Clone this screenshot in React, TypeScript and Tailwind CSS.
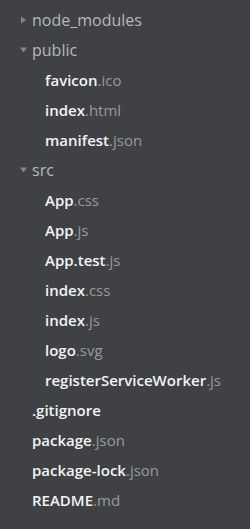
import React from 'react';

type Row = {
  name: string;
  ext?: string;
  depth: number;
  folder?: 'open' | 'closed';
};

const rows: Row[] = [
  { name: 'node_modules', depth: 0, folder: 'closed' },
  { name: 'public', depth: 0, folder: 'open' },
  { name: 'favicon', ext: '.ico', depth: 1 },
  { name: 'index', ext: '.html', depth: 1 },
  { name: 'manifest', ext: '.json', depth: 1 },
  { name: 'src', depth: 0, folder: 'open' },
  { name: 'App', ext: '.css', depth: 1 },
  { name: 'App', ext: '.js', depth: 1 },
  { name: 'App.test', ext: '.js', depth: 1 },
  { name: 'index', ext: '.css', depth: 1 },
  { name: 'index', ext: '.js', depth: 1 },
  { name: 'logo', ext: '.svg', depth: 1 },
  { name: 'registerServiceWorker', ext: '.js', depth: 1 },
  { name: '.gitignore', depth: 0 },
  { name: 'package', ext: '.json', depth: 0 },
  { name: 'package-lock', ext: '.json', depth: 0 },
  { name: 'README', ext: '.md', depth: 0 },
];

function Arrow({ open }: { open: boolean }) {
  return (
    <svg width="7" height="8" viewBox="0 0 7 8" className="mr-[5px] shrink-0">
      {open ? (
        <polygon points="0,1.5 7,1.5 3.5,6.5" fill="#85878b" />
      ) : (
        <polygon points="1,0.5 6,4 1,7.5" fill="#85878b" />
      )}
    </svg>
  );
}

export default function App() {
  return (
    <div
      className="w-[250px] h-[529px] bg-[#404144] pt-[5px] text-[15px] leading-[30px]"
      style={{ fontFamily: '"Open Sans", "Noto Sans", sans-serif' }}
    >
      {rows.map((r, i) => (
        <div key={i} className="flex items-center h-[30px] whitespace-nowrap">
          {r.folder ? (
            <div className="flex items-center pl-[20px]">
              <Arrow open={r.folder === 'open'} />
              <span className="text-[16px] text-[#b6b8bb]">{r.name}</span>
            </div>
          ) : (
            <div className={r.depth === 1 ? 'pl-[45px]' : 'pl-[32px]'}>
              <span className="font-semibold text-[#f2f3f4]">{r.name}</span>
              {r.ext && <span className="text-[#979a9f]">{r.ext}</span>}
            </div>
          )}
        </div>
      ))}
    </div>
  );
}
